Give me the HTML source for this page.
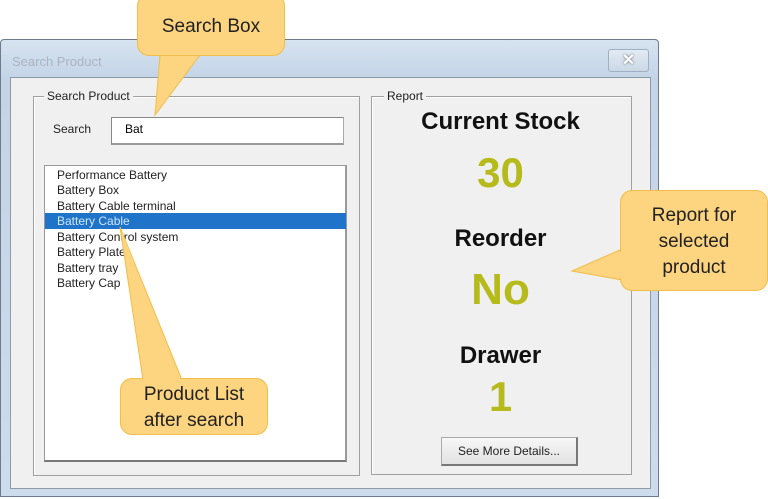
<!DOCTYPE html>
<html><head><meta charset="utf-8"><style>
body{margin:0;width:768px;height:499px;background:#fff;position:relative;overflow:hidden;font-family:"Liberation Sans",sans-serif}
.a{position:absolute}
.win{left:0;top:39px;width:659px;height:458px;background:linear-gradient(#d6e3f0,#c3d4e7 40px,#cddcec);border:1px solid #6d7b8c;border-radius:4px 4px 0 0;box-sizing:border-box}
.client{left:10px;top:77px;width:641px;height:412px;background:#f0f0f0;border:1px solid #8e9aa7;box-sizing:border-box}
.frame{border:1px solid #a0a0a0;box-shadow:1px 1px 0 #fff inset;box-sizing:border-box}
.lbl{font-size:12px;color:#222;background:#f0f0f0;padding:0 3px}
.item{position:absolute;left:12px;font-size:12px;color:#222;line-height:15px}
.big{width:261px;text-align:center;font-weight:bold}
.call{background:#fdd47f;border:1px solid #f2bd4a;border-radius:12px;box-sizing:border-box;text-align:center;color:#222;font-size:19px}
</style></head><body>
<div class="a win"></div>
<div class="a" style="left:12px;top:54px;font-size:13px;color:#a9b4c0">Search Product</div>
<div class="a" style="left:608px;top:49px;width:41px;height:23px;border:1px solid #9fb0c3;border-radius:3px;background:linear-gradient(#e3ebf4,#cbd8e6);box-sizing:border-box;text-align:center;font-size:16px;line-height:21px;color:#fff;font-weight:bold;text-shadow:0 0 2px #555">✕</div>
<div class="a client"></div>
<div class="a frame" style="left:33px;top:96px;width:327px;height:380px"></div>
<div class="a lbl" style="left:44px;top:89px">Search Product</div>
<div class="a" style="left:53px;top:122px;font-size:12px;color:#222">Search</div>
<div class="a" style="left:111px;top:117px;width:233px;height:28px;background:#fff;border:1px solid #888;border-right-color:#aaa;border-bottom:2px solid #999;box-sizing:border-box;font-size:12px;padding:4px 0 0 13px">Bat</div>
<div class="a" style="left:44px;top:165px;width:303px;height:297px;background:#fff;border:1px solid #999;border-bottom:2px solid #777;border-right:2px solid #999;box-sizing:border-box">
<div class="item" style="top:2px">Performance Battery</div>
<div class="item" style="top:17px">Battery Box</div>
<div class="item" style="top:33px">Battery Cable terminal</div>
<div class="a" style="left:0;top:47px;width:301px;height:16px;background:#1f73c8"></div>
<div class="item" style="top:48px;color:#cfe4ff">Battery Cable</div>
<div class="item" style="top:64px">Battery Control system</div>
<div class="item" style="top:79px">Battery Plate</div>
<div class="item" style="top:95px">Battery tray</div>
<div class="item" style="top:110px">Battery Cap</div>
</div>
<div class="a frame" style="left:371px;top:96px;width:261px;height:379px"></div>
<div class="a lbl" style="left:384px;top:89px">Report</div>
<div class="a big" style="left:370px;top:108px;font-size:24px;color:#111">Current Stock</div>
<div class="a big" style="left:370px;top:149px;font-size:42px;color:#b6bb1b">30</div>
<div class="a big" style="left:370px;top:225px;font-size:24px;color:#111">Reorder</div>
<div class="a big" style="left:370px;top:265px;font-size:44px;color:#b6bb1b">No</div>
<div class="a big" style="left:370px;top:342px;font-size:24px;color:#111">Drawer</div>
<div class="a big" style="left:370px;top:373px;font-size:42px;color:#b6bb1b">1</div>
<div class="a" style="left:441px;top:437px;width:137px;height:29px;background:linear-gradient(#f7f7f7,#e2e2e2);border:1px solid #aaa;border-right:2px solid #777;border-bottom:2px solid #777;box-sizing:border-box;font-size:12px;text-align:center;line-height:26px;color:#222">See More Details...</div>
<svg class="a" style="left:0;top:0" width="768" height="499">
<g fill="#fdd47f" stroke="#f2bd4a" stroke-width="1">
<polygon points="155,115 160,55 200,55"/>
<polygon points="120,227 143,380 182,380"/>
<polygon points="572,271 622,249 622,280"/>
</g></svg>
<div class="a call" style="left:137px;top:-6px;width:148px;height:62px;padding-top:21px">Search Box</div>
<div class="a call" style="left:620px;top:190px;width:148px;height:101px;padding-top:12px;line-height:26px">Report for<br>selected<br>product</div>
<div class="a call" style="left:120px;top:378px;width:148px;height:57px;padding-top:3px;line-height:26px">Product List<br>after search</div>
<svg class="a" style="left:0;top:0" width="768" height="499">
<polygon points="157,111 162,57 198,57" fill="#fdd47f"/>
<polygon points="122,232 144,382 181,382" fill="#fdd47f"/>
<polygon points="576,270 623,251 623,278" fill="#fdd47f"/>
</svg>
</body></html>
